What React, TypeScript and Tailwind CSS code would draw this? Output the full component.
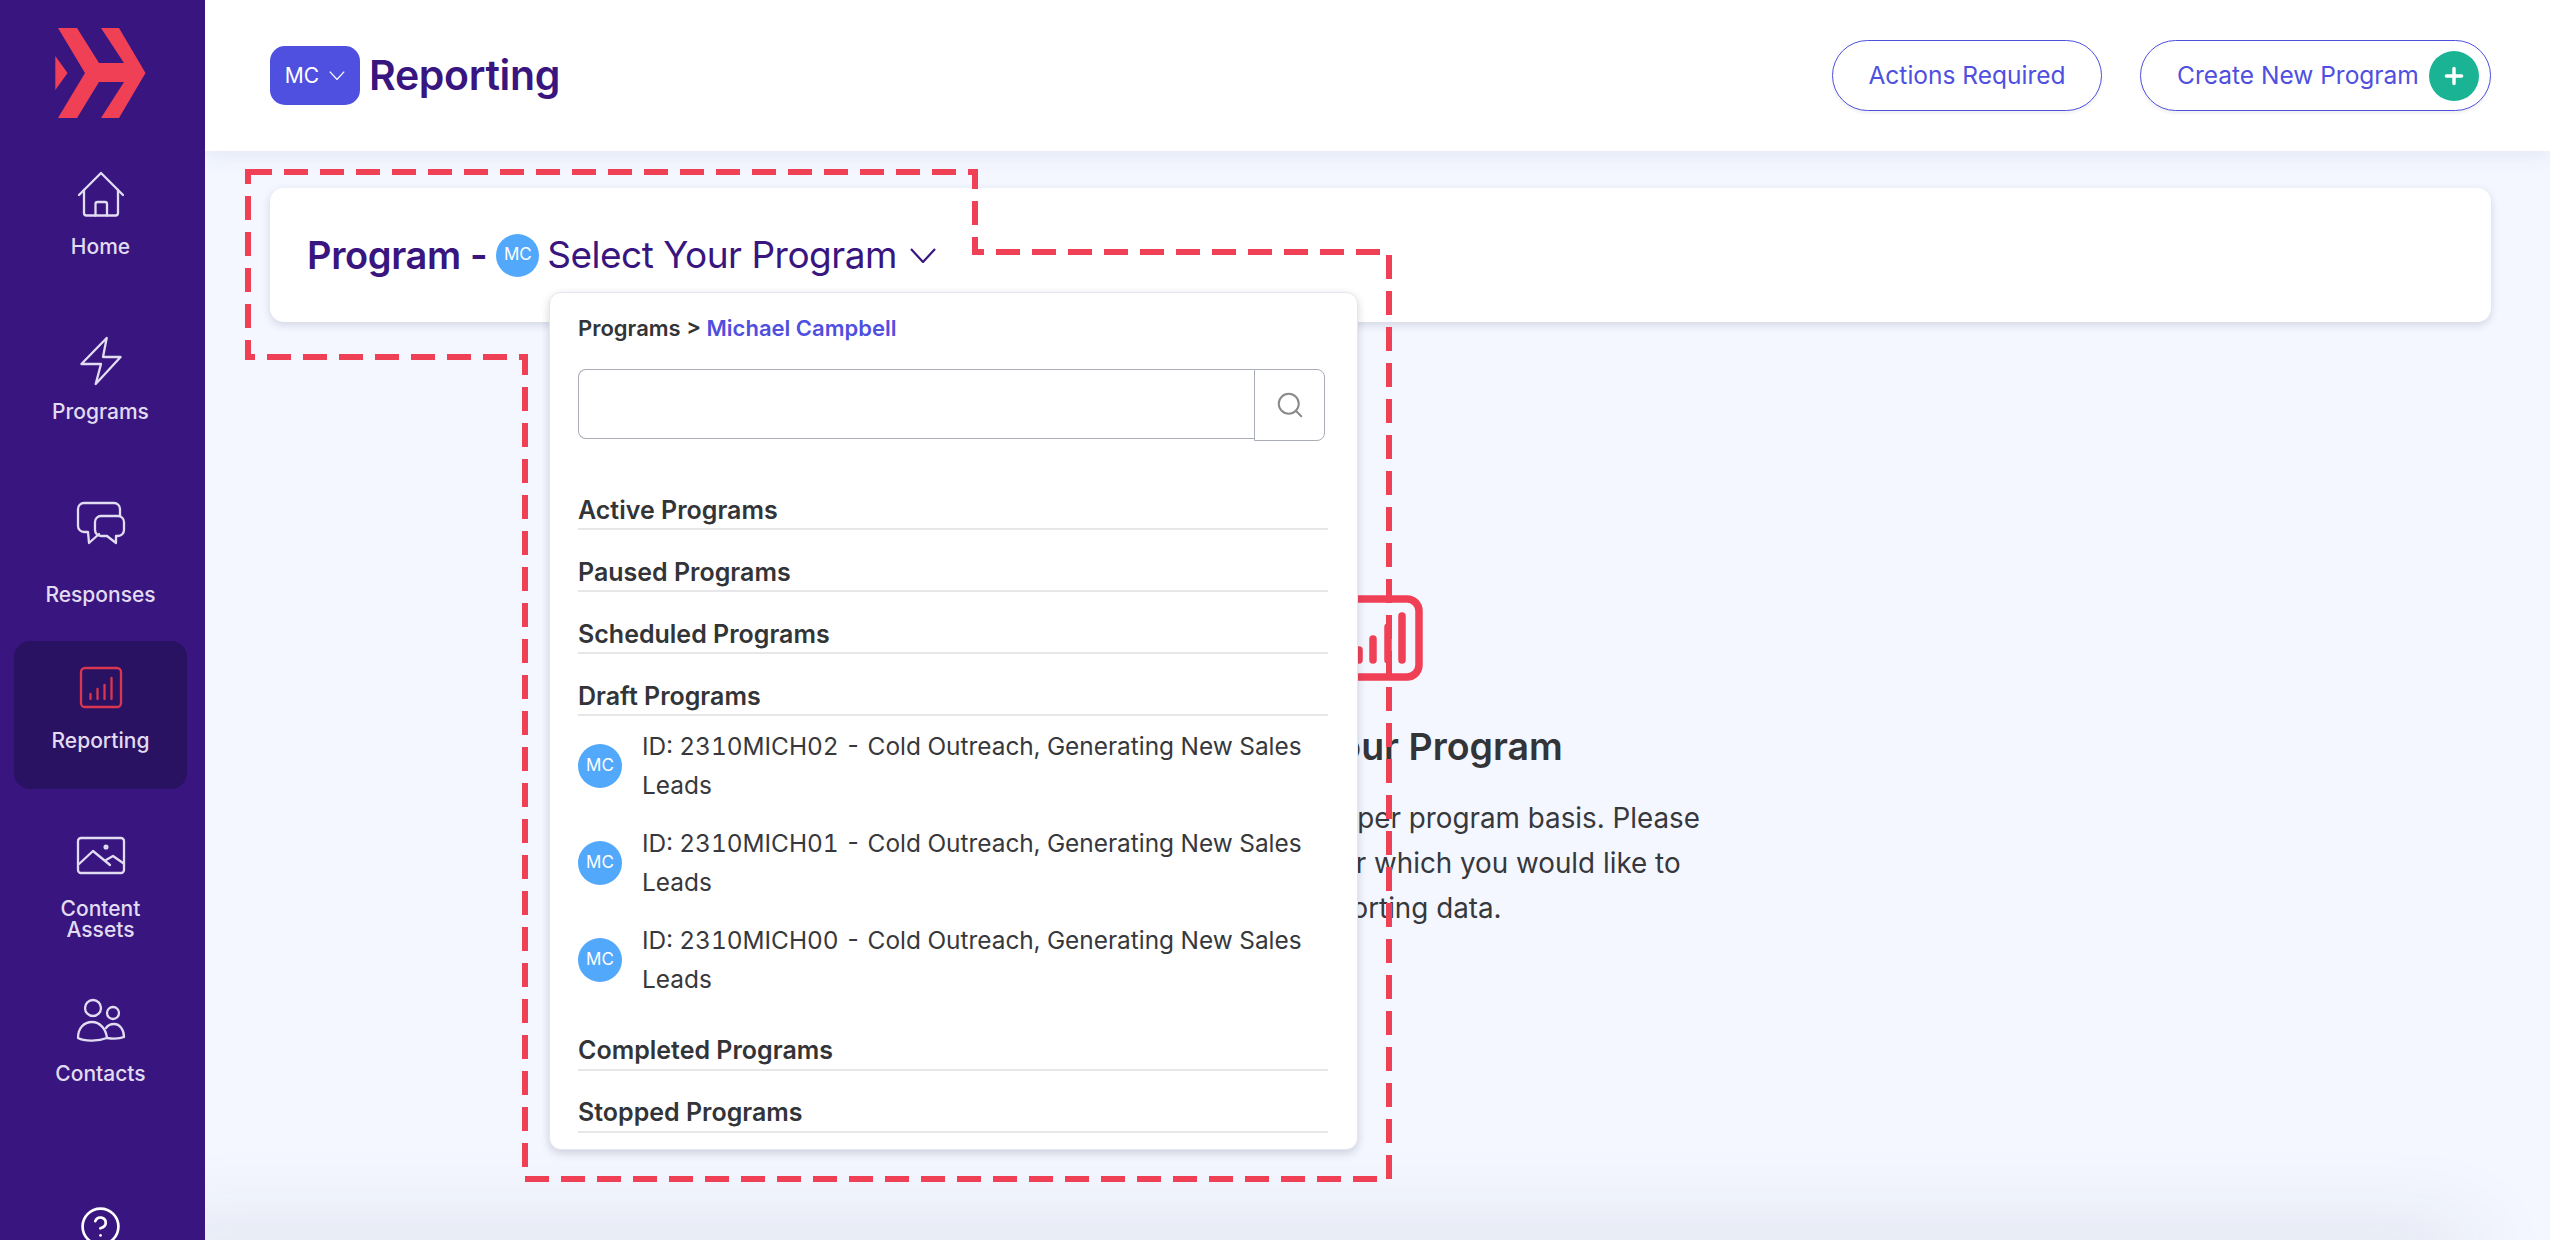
import { CircleHelp, Plus, Search } from "lucide-react";
import type { ReactNode } from "react";

const draftPrograms = ["2310MICH02", "2310MICH01", "2310MICH00"];

function Chevron({ className }: { className: string }) {
  return (
    <svg viewBox="0 0 26 15" fill="none" className={className}>
      <path d="M1 1l12 13L25 1" stroke="currentColor" strokeWidth="2.2" />
    </svg>
  );
}

function Logo() {
  return (
    <svg viewBox="54 28 91 90" className="h-[90px] w-[91px] text-[#f04056]" fill="currentColor">
      <path d="M54.3 56L66.5 73L54.3 90Z" />
      <path d="M57 28H76L98 63H123L100 28H118L144.5 73L118 118H100L123 82H98L76 118H57L84 73Z" />
    </svg>
  );
}

const stroke = {
  fill: "none",
  stroke: "currentColor",
  strokeWidth: 2.3,
  strokeLinejoin: "round" as const,
  strokeLinecap: "round" as const,
};

function HomeIcon() {
  return (
    <svg viewBox="76 170 48 46" className="h-[46px] w-[48px]" {...stroke}>
      <path d="M78 194L100 172L122 194" />
      <path d="M83 189V212a2.5 2.5 0 0 0 2.5 2.5H114.5a2.5 2.5 0 0 0 2.5-2.5V189" />
      <path d="M94.5 214.5V203a2 2 0 0 1 2-2H104a2 2 0 0 1 2 2V214.5" />
    </svg>
  );
}

function BoltIcon() {
  return (
    <svg viewBox="78 335 44 50" className="h-[50px] w-[44px]" {...stroke}>
      <path d="M105.7 337L80.4 363H100L94.7 383L119.6 356H102Z" />
    </svg>
  );
}

function ChatIcon() {
  return (
    <svg viewBox="75 502 50 45" className="h-[45px] w-[50px]" {...stroke}>
      <path d="M119 517V510a6 6 0 0 0-6-6H83a6 6 0 0 0-6 6V527a6 6 0 0 0 6 6h4l1 11 10-9" />
      <path d="M100 517H117a6 6 0 0 1 6 6v8a6 6 0 0 1-6 6h-2v7l-9-7H100a6 6 0 0 1-6-6v-8a6 6 0 0 1 6-6Z" />
    </svg>
  );
}

function ReportIcon() {
  return (
    <svg viewBox="78 669 44 43" className="h-[43px] w-[44px] text-[#d9364f]" {...stroke}>
      <rect x="80" y="671" width="40" height="39" rx="4" />
      <path d="M89.5 697V702M96.5 692V702M103.5 688V702M110.5 681V702" />
    </svg>
  );
}

function ImageIcon() {
  return (
    <svg viewBox="75 837 50 39" className="h-[39px] w-[50px]" {...stroke}>
      <rect x="77" y="839" width="46" height="35" rx="3" />
      <path d="M78 865L92 852L109 866M105 861L112 857L122 864" />
      <circle cx="105" cy="848" r="1.4" />
    </svg>
  );
}

function UsersIcon() {
  return (
    <svg viewBox="75 998 50 46" className="h-[46px] w-[50px]" {...stroke}>
      <circle cx="92" cy="1009" r="8" />
      <circle cx="112" cy="1014" r="6" />
      <path d="M77 1039c0-10 6-16 14-16s14 7 15 16c-8 3-22 4-29 0Z" />
      <path d="M105 1029c2-3 5-4 8-4c6 0 10 6 10 13c-5 2-10 2-17 1" />
    </svg>
  );
}

function NavItem({
  icon,
  label,
  className,
  gap,
}: {
  icon: ReactNode;
  label: ReactNode;
  className: string;
  gap: string;
}) {
  return (
    <a className={`flex flex-col items-center text-center text-[21px] leading-[21px] font-medium text-[#e2dcf2] ${className}`}>
      <span className={`flex justify-center ${gap}`}>{icon}</span>
      <span>{label}</span>
    </a>
  );
}

function Sidebar() {
  return (
    <aside className="flex h-full w-[205px] shrink-0 flex-col items-stretch overflow-hidden bg-[#39167f] pr-[4px]">
      <div className="flex h-[171px] shrink-0 justify-center pt-[28px] pr-[1px]">
        <Logo />
      </div>
      <NavItem icon={<HomeIcon />} label="Home" gap="mb-[19px]" className="h-[86px]" />
      <NavItem icon={<BoltIcon />} label="Programs" gap="mb-[15px]" className="mt-[79px] h-[86px]" />
      <NavItem icon={<ChatIcon />} label="Responses" gap="mb-[38px]" className="mt-[79px]" />
      <div className="mx-[14px] mt-[36px] h-[148px] shrink-0 rounded-[16px] bg-[#2a1262] pt-[25px]">
        <NavItem icon={<ReportIcon />} label="Reporting" gap="mb-[21px]" className="" />
      </div>
      <NavItem
        icon={<ImageIcon />}
        label={
          <>
            Content
            <br />
            Assets
          </>
        }
        gap="mb-[23px]"
        className="mt-[47px]"
      />
      <NavItem icon={<UsersIcon />} label="Contacts" gap="mb-[20px]" className="mt-[57px]" />
      <div className="mt-[121px] flex justify-center text-white">
        <CircleHelp size={43} strokeWidth={1.5} />
      </div>
    </aside>
  );
}

function Header() {
  return (
    <header className="relative z-10 flex h-[151px] shrink-0 items-center justify-between bg-white pr-[59px] pl-[65px] shadow-[0_4px_20px_rgba(60,70,130,0.09)]">
      <div className="flex items-center gap-[9px]">
        <button className="flex h-[59px] w-[90px] items-center justify-center gap-[10px] rounded-[15px] bg-[#4f4fe0] text-[21px] text-white">
          MC
          <Chevron className="h-[9px] w-[16px]" />
        </button>
        <h1 className="text-[41px] font-semibold tracking-[-0.008em] text-[#39167f]">Reporting</h1>
      </div>
      <div className="flex items-center gap-[38px] text-[24.5px] text-[#4f4fe0]">
        <button className="h-[71px] w-[270px] rounded-full border-[1.5px] border-[#4f4fe0] bg-white shadow-[0_3px_3px_rgba(0,0,0,0.05)]">
          Actions Required
        </button>
        <button className="flex h-[71px] w-[351px] items-center justify-between rounded-full border-[1.5px] border-[#4f4fe0] bg-white pr-[11px] pl-[36px] shadow-[0_3px_3px_rgba(0,0,0,0.05)]">
          Create New Program
          <span className="flex h-[50px] w-[50px] items-center justify-center rounded-full bg-[#1ab394] text-white">
            <Plus size={26} strokeWidth={3.2} />
          </span>
        </button>
      </div>
    </header>
  );
}

function SectionHeading({ title }: { title: string }) {
  return (
    <div className="h-[62px]">
      <div className="flex h-[43px] items-end border-b-2 border-[#e7e7ea] pb-[3.5px] text-[25px] leading-[30px] font-semibold text-[#333438]">
        {title}
      </div>
    </div>
  );
}

function ProgramDropdown() {
  return (
    <div className="absolute top-[141px] left-[344px] z-20 h-[858px] w-[809px] rounded-[12px] border border-[#e6e7ee] bg-white pt-[21px] pr-[29px] pl-[28px] shadow-[0_3px_8px_rgba(40,45,80,0.2)]">
      <div className="text-[22px] leading-[28px] font-semibold text-[#333438]">
        Programs &gt; <span className="text-[#4f4fe0]">Michael Campbell</span>
      </div>
      <div className="mt-[27px] flex items-start pr-[3px]">
        <input className="h-[70px] flex-1 rounded-l-[8px] border border-r-0 border-[#a9adb8] bg-white outline-none" />
        <span className="flex h-[72px] w-[71px] items-center justify-center rounded-r-[8px] border border-[#a9adb8] text-[#8a8a8a]">
          <Search size={30} strokeWidth={1.6} />
        </span>
      </div>
      <div className="mt-[46px]">
        <SectionHeading title="Active Programs" />
        <SectionHeading title="Paused Programs" />
        <SectionHeading title="Scheduled Programs" />
        <SectionHeading title="Draft Programs" />
      </div>
      <div className="-mt-[8.5px] flex flex-col">
        {draftPrograms.map((id) => (
          <div key={id} className="mb-[19px] flex h-[78px] items-center gap-[20px]">
            <span className="flex h-[44px] w-[44px] shrink-0 items-center justify-center rounded-full bg-[#52a8fb] text-[17px] text-white">
              MC
            </span>
            <span className="text-[24.4px] leading-[39px] text-[#37383c] tabular-nums">
              ID: {id} - Cold Outreach, Generating New Sales Leads
            </span>
          </div>
        ))}
      </div>
      <div className="mt-[10px]">
        <SectionHeading title="Completed Programs" />
        <SectionHeading title="Stopped Programs" />
      </div>
    </div>
  );
}

function EmptyState() {
  return (
    <div className="mt-[273px] mr-[6px] flex flex-col items-center text-center">
      <svg viewBox="0 0 90 86" className="h-[86px] w-[90px] text-[#f04056]" fill="none" stroke="currentColor">
        <rect x="4" y="4" width="82" height="78" rx="12" strokeWidth="7.5" />
        <path d="M26 55V65M40 44V65M55 32V65M69 21V65" strokeWidth="7.5" strokeLinecap="round" />
      </svg>
      <h2 className="mt-[41px] text-[37.5px] leading-[50px] font-semibold text-[#333438]">Select Your Program</h2>
      <p className="mt-[24px] text-[27.8px] leading-[45px] text-[#37383c]">
        Data is presented on a per program basis. Please
        <br />
        select the program for which you would like to
        <br />
        see reporting data.
      </p>
    </div>
  );
}

export default function App() {
  return (
    <div className="relative flex h-screen w-screen overflow-hidden bg-[#f4f7ff] [font-family:Inter,sans-serif]">
      <Sidebar />
      <main className="relative flex min-w-0 flex-1 flex-col overflow-hidden">
        <Header />
        <div className="relative flex-1 pr-[59px] pl-[65px]">
          <section className="mt-[37px] flex h-[134px] items-center rounded-[14px] bg-white pl-[37px] shadow-[0_3px_9px_rgba(40,45,80,0.16)]">
            <span className="text-[38px] font-semibold tracking-[-0.01em] text-[#39167f]">Program -</span>
            <span className="ml-[9px] flex h-[43px] w-[43px] items-center justify-center rounded-full bg-[#52a8fb] text-[17px] text-white">
              MC
            </span>
            <span className="ml-[8px] text-[37px] tracking-[-0.5px] text-[#39167f]">Select Your Program</span>
            <Chevron className="ml-[13px] h-[15px] w-[26px] text-[#39167f]" />
          </section>
          <EmptyState />
          <ProgramDropdown />
        </div>
        {/* top edge of the next card, just below the fold */}
        <div className="pointer-events-none absolute right-[75px] -bottom-[30px] -left-[60px] z-10 h-[30px] rounded-[14px] shadow-[0_0_90px_rgba(40,45,80,0.2)]" />
      </main>
      <svg className="pointer-events-none absolute top-0 left-0 z-30 h-[1240px] w-[2550px]" viewBox="0 0 2550 1240" fill="none">
        <path
          d="M248 172H975V252H1389V1179H525V357H248Z"
          stroke="#f04056"
          strokeWidth="6"
          strokeDasharray="24 12"
        />
      </svg>
    </div>
  );
}
